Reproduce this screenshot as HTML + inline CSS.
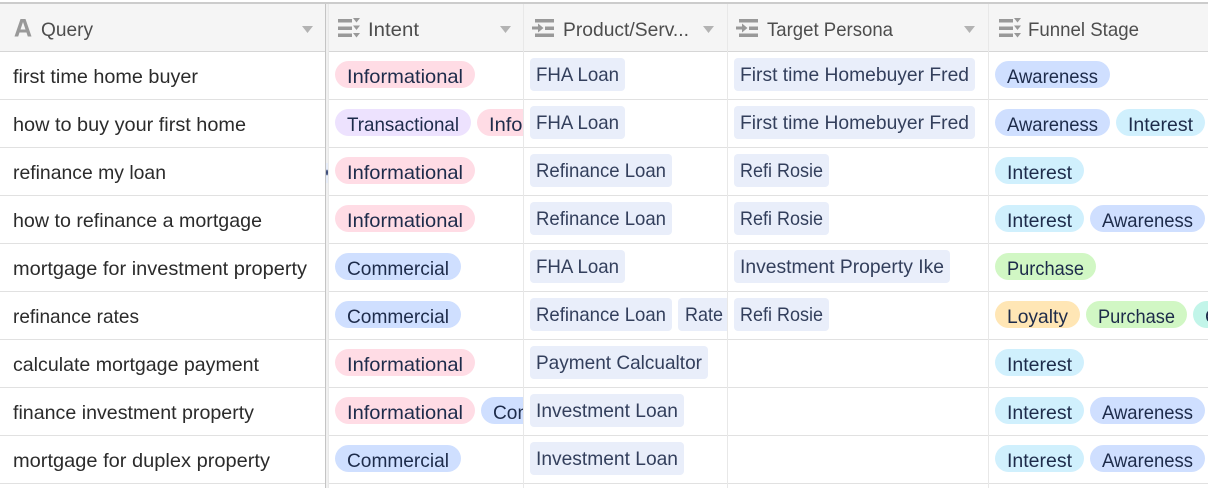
<!DOCTYPE html>
<html><head><meta charset="utf-8"><style>
html,body{margin:0;padding:0;background:#fff;width:1208px;height:488px;overflow:hidden}
svg{display:block}
text{font-family:"Liberation Sans",Arial,sans-serif;font-size:19.5px;fill:#1d2b4a}
.q text{fill:#2b2b2b}
.h text{fill:#4d4d4d}
.r text{fill:#333f5c}
.pk{fill:#ffdce5}.pu{fill:#ede2fe}.bl{fill:#cfdfff}.cy{fill:#d0f0fd}.gr{fill:#d1f7c4}.or{fill:#ffe6b5}.te{fill:#c2f5e9}.rc{fill:#e9eefa}
.ic{fill:#999999}
</style></head><body>
<svg width="1208" height="488" viewBox="0 0 1208 488" xmlns="http://www.w3.org/2000/svg">
<defs>
<clipPath id="ci"><rect x="329" y="0" width="194" height="488"/></clipPath>
<clipPath id="cp"><rect x="524" y="0" width="203" height="488"/></clipPath>
</defs>
<rect width="1208" height="488" fill="#fff"/>
<rect y="3" width="1208" height="48" fill="#f5f5f5"/>
<rect y="2" width="1208" height="2" fill="#cccccc"/>
<g fill="#e1e1e1">
<rect y="51" width="1208" height="1" fill="#d6d6d6"/>
<rect y="99" width="1208" height="1"/><rect y="147" width="1208" height="1"/><rect y="195" width="1208" height="1"/><rect y="243" width="1208" height="1"/><rect y="291" width="1208" height="1"/><rect y="339" width="1208" height="1"/><rect y="387" width="1208" height="1"/><rect y="435" width="1208" height="1"/><rect y="483" width="1208" height="1"/>
</g>
<rect x="326" y="4" width="3" height="484" fill="#f0f0f0"/>
<rect x="325" y="4" width="1" height="484" fill="#c4c4c4"/>
<g fill="#e8e8e8"><rect x="328" y="4" width="1" height="484"/><rect x="523" y="4" width="1" height="484"/><rect x="727" y="4" width="1" height="484"/><rect x="988" y="4" width="1" height="484"/></g>
<rect x="326" y="163" width="2" height="20" fill="#e6ecf8"/>
<ellipse cx="327" cy="172.500" rx="1" ry="3" fill="#3a4a78"/>

<g class="h">
<path class="ic" d="M14.500 36.500 L20.500 19 L25.500 19 L31.500 36.500 L27.800 36.500 L26.500 32.500 L19.500 32.500 L18.200 36.500 Z M20.500 29.500 L25.500 29.500 L23 22 Z" fill-rule="evenodd"/>
<text x="41" y="36" textLength="52" lengthAdjust="spacingAndGlyphs">Query</text>
<path d="M302 26h11l-5.500 7z" style="fill:#b3b3b3"/>
<g class="ic"><rect x="338" y="19" width="14" height="3.500"/><rect x="338" y="26.500" width="14" height="3.500"/><rect x="338" y="33.500" width="14" height="3.500"/><path d="M353 18h7l-3.500 4.500zM353 25.500h7l-3.500 4.500zM353 33h7l-3.500 4.500z"/></g>
<text x="368" y="36" textLength="51" lengthAdjust="spacingAndGlyphs">Intent</text>
<path d="M500 26h11l-5.500 7z" style="fill:#b3b3b3"/>
<g class="ic"><rect x="535" y="19" width="19" height="3.500"/><rect x="532" y="26.500" width="8" height="3"/><path d="M538 23.500l5.500 4.500-5.500 4.500z"/><rect x="545" y="26.500" width="9" height="3.500"/><rect x="535" y="33.500" width="19" height="3.500"/></g>
<text x="563" y="36" textLength="126" lengthAdjust="spacingAndGlyphs">Product/Serv...</text>
<path d="M703 26h11l-5.500 7z" style="fill:#b3b3b3"/>
<g class="ic"><rect x="739" y="19" width="19" height="3.500"/><rect x="736" y="26.500" width="8" height="3"/><path d="M742 23.500l5.500 4.500-5.500 4.500z"/><rect x="749" y="26.500" width="9" height="3.500"/><rect x="739" y="33.500" width="19" height="3.500"/></g>
<text x="767" y="36" textLength="126" lengthAdjust="spacingAndGlyphs">Target Persona</text>
<path d="M964 26h11l-5.500 7z" style="fill:#b3b3b3"/>
<g class="ic"><rect x="999" y="19" width="14" height="3.500"/><rect x="999" y="26.500" width="14" height="3.500"/><rect x="999" y="33.500" width="14" height="3.500"/><path d="M1014 18h7l-3.500 4.500zM1014 25.500h7l-3.500 4.500zM1014 33h7l-3.500 4.500z"/></g>
<text x="1028" y="36" textLength="111" lengthAdjust="spacingAndGlyphs">Funnel Stage</text>
</g>

<g class="q">
<text x="13" y="83" textLength="185" lengthAdjust="spacingAndGlyphs">first time home buyer</text>
<text x="13" y="131" textLength="233" lengthAdjust="spacingAndGlyphs">how to buy your first home</text>
<text x="13" y="179" textLength="153" lengthAdjust="spacingAndGlyphs">refinance my loan</text>
<text x="13" y="227" textLength="249" lengthAdjust="spacingAndGlyphs">how to refinance a mortgage</text>
<text x="13" y="275" textLength="294" lengthAdjust="spacingAndGlyphs">mortgage for investment property</text>
<text x="13" y="323" textLength="126" lengthAdjust="spacingAndGlyphs">refinance rates</text>
<text x="13" y="371" textLength="246" lengthAdjust="spacingAndGlyphs">calculate mortgage payment</text>
<text x="13" y="419" textLength="241" lengthAdjust="spacingAndGlyphs">finance investment property</text>
<text x="13" y="467" textLength="257" lengthAdjust="spacingAndGlyphs">mortgage for duplex property</text>
</g>

<g clip-path="url(#ci)">
<rect class="pk" x="335" y="61" width="140" height="27" rx="13.500"/><text x="347" y="83" textLength="116" lengthAdjust="spacingAndGlyphs">Informational</text>
<rect class="pu" x="335" y="109" width="136" height="27" rx="13.500"/><text x="347" y="131" textLength="112" lengthAdjust="spacingAndGlyphs">Transactional</text>
<rect class="pk" x="477" y="109" width="140" height="27" rx="13.500"/><text x="489" y="131" textLength="116" lengthAdjust="spacingAndGlyphs">Informational</text>
<rect class="pk" x="335" y="157" width="140" height="27" rx="13.500"/><text x="347" y="179" textLength="116" lengthAdjust="spacingAndGlyphs">Informational</text>
<rect class="pk" x="335" y="205" width="140" height="27" rx="13.500"/><text x="347" y="227" textLength="116" lengthAdjust="spacingAndGlyphs">Informational</text>
<rect class="bl" x="335" y="253" width="126" height="27" rx="13.500"/><text x="347" y="275" textLength="102" lengthAdjust="spacingAndGlyphs">Commercial</text>
<rect class="bl" x="335" y="301" width="126" height="27" rx="13.500"/><text x="347" y="323" textLength="102" lengthAdjust="spacingAndGlyphs">Commercial</text>
<rect class="pk" x="335" y="349" width="140" height="27" rx="13.500"/><text x="347" y="371" textLength="116" lengthAdjust="spacingAndGlyphs">Informational</text>
<rect class="pk" x="335" y="397" width="140" height="27" rx="13.500"/><text x="347" y="419" textLength="116" lengthAdjust="spacingAndGlyphs">Informational</text>
<rect class="bl" x="481" y="397" width="126" height="27" rx="13.500"/><text x="493" y="419" textLength="102" lengthAdjust="spacingAndGlyphs">Commercial</text>
<rect class="bl" x="335" y="445" width="126" height="27" rx="13.500"/><text x="347" y="467" textLength="102" lengthAdjust="spacingAndGlyphs">Commercial</text>
</g>

<g class="r" clip-path="url(#cp)">
<rect class="rc" x="530" y="58" width="95" height="33" rx="4"/><text x="536" y="81" textLength="83" lengthAdjust="spacingAndGlyphs">FHA Loan</text>
<rect class="rc" x="530" y="106" width="95" height="33" rx="4"/><text x="536" y="129" textLength="83" lengthAdjust="spacingAndGlyphs">FHA Loan</text>
<rect class="rc" x="530" y="154" width="142" height="33" rx="4"/><text x="536" y="177" textLength="130" lengthAdjust="spacingAndGlyphs">Refinance Loan</text>
<rect class="rc" x="530" y="202" width="142" height="33" rx="4"/><text x="536" y="225" textLength="130" lengthAdjust="spacingAndGlyphs">Refinance Loan</text>
<rect class="rc" x="530" y="250" width="95" height="33" rx="4"/><text x="536" y="273" textLength="83" lengthAdjust="spacingAndGlyphs">FHA Loan</text>
<rect class="rc" x="530" y="298" width="142" height="33" rx="4"/><text x="536" y="321" textLength="130" lengthAdjust="spacingAndGlyphs">Refinance Loan</text>
<rect class="rc" x="678" y="298" width="60" height="33" rx="4"/><text x="685" y="321" textLength="38" lengthAdjust="spacingAndGlyphs">Rate</text>
<rect class="rc" x="530" y="346" width="178" height="33" rx="4"/><text x="536" y="369" textLength="166" lengthAdjust="spacingAndGlyphs">Payment Calcualtor</text>
<rect class="rc" x="530" y="394" width="154" height="33" rx="4"/><text x="536" y="417" textLength="142" lengthAdjust="spacingAndGlyphs">Investment Loan</text>
<rect class="rc" x="530" y="442" width="154" height="33" rx="4"/><text x="536" y="465" textLength="142" lengthAdjust="spacingAndGlyphs">Investment Loan</text>
</g>

<g class="r">
<rect class="rc" x="734" y="58" width="241" height="33" rx="4"/><text x="740" y="81" textLength="229" lengthAdjust="spacingAndGlyphs">First time Homebuyer Fred</text>
<rect class="rc" x="734" y="106" width="241" height="33" rx="4"/><text x="740" y="129" textLength="229" lengthAdjust="spacingAndGlyphs">First time Homebuyer Fred</text>
<rect class="rc" x="734" y="154" width="95" height="33" rx="4"/><text x="740" y="177" textLength="83" lengthAdjust="spacingAndGlyphs">Refi Rosie</text>
<rect class="rc" x="734" y="202" width="95" height="33" rx="4"/><text x="740" y="225" textLength="83" lengthAdjust="spacingAndGlyphs">Refi Rosie</text>
<rect class="rc" x="734" y="250" width="216" height="33" rx="4"/><text x="740" y="273" textLength="204" lengthAdjust="spacingAndGlyphs">Investment Property Ike</text>
<rect class="rc" x="734" y="298" width="95" height="33" rx="4"/><text x="740" y="321" textLength="83" lengthAdjust="spacingAndGlyphs">Refi Rosie</text>
</g>

<g>
<rect class="bl" x="995" y="61" width="115" height="27" rx="13.500"/><text x="1007" y="83" textLength="91" lengthAdjust="spacingAndGlyphs">Awareness</text>
<rect class="bl" x="995" y="109" width="115" height="27" rx="13.500"/><text x="1007" y="131" textLength="91" lengthAdjust="spacingAndGlyphs">Awareness</text>
<rect class="cy" x="1116" y="109" width="89" height="27" rx="13.500"/><text x="1128" y="131" textLength="65" lengthAdjust="spacingAndGlyphs">Interest</text>
<rect class="cy" x="995" y="157" width="89" height="27" rx="13.500"/><text x="1007" y="179" textLength="65" lengthAdjust="spacingAndGlyphs">Interest</text>
<rect class="cy" x="995" y="205" width="89" height="27" rx="13.500"/><text x="1007" y="227" textLength="65" lengthAdjust="spacingAndGlyphs">Interest</text>
<rect class="bl" x="1090" y="205" width="115" height="27" rx="13.500"/><text x="1102" y="227" textLength="91" lengthAdjust="spacingAndGlyphs">Awareness</text>
<rect class="gr" x="995" y="253" width="101" height="27" rx="13.500"/><text x="1007" y="275" textLength="77" lengthAdjust="spacingAndGlyphs">Purchase</text>
<rect class="or" x="995" y="301" width="85" height="27" rx="13.500"/><text x="1007" y="323" textLength="61" lengthAdjust="spacingAndGlyphs">Loyalty</text>
<rect class="gr" x="1086" y="301" width="101" height="27" rx="13.500"/><text x="1098" y="323" textLength="77" lengthAdjust="spacingAndGlyphs">Purchase</text>
<rect class="te" x="1193" y="301" width="60" height="27" rx="13.500"/><text x="1205" y="323">C</text>
<rect class="cy" x="995" y="349" width="89" height="27" rx="13.500"/><text x="1007" y="371" textLength="65" lengthAdjust="spacingAndGlyphs">Interest</text>
<rect class="cy" x="995" y="397" width="89" height="27" rx="13.500"/><text x="1007" y="419" textLength="65" lengthAdjust="spacingAndGlyphs">Interest</text>
<rect class="bl" x="1090" y="397" width="115" height="27" rx="13.500"/><text x="1102" y="419" textLength="91" lengthAdjust="spacingAndGlyphs">Awareness</text>
<rect class="cy" x="995" y="445" width="89" height="27" rx="13.500"/><text x="1007" y="467" textLength="65" lengthAdjust="spacingAndGlyphs">Interest</text>
<rect class="bl" x="1090" y="445" width="115" height="27" rx="13.500"/><text x="1102" y="467" textLength="91" lengthAdjust="spacingAndGlyphs">Awareness</text>
</g>
</svg>
</body></html>
